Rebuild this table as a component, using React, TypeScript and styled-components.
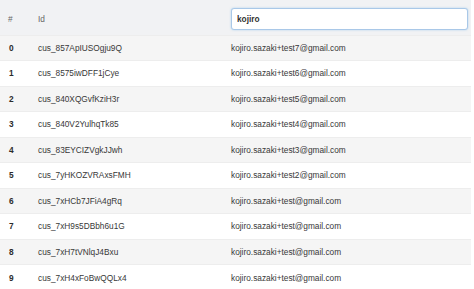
import styled, { createGlobalStyle } from "styled-components"

const GlobalStyle = createGlobalStyle`
	html, body {
		margin: 0;
		padding: 0;
		background: #ffffff;
	}
	body {
		font-family: "Liberation Sans", Arial, sans-serif;
		font-size: 8.3px;
		color: #333333;
	}
`

const Table = styled.table`
	width: 471px;
	border-collapse: collapse;
	table-layout: fixed;
`

const HeadRow = styled.tr`
	background-color: #f1f2f4;
	height: 35px;
`

const HeadCell = styled.th<{ $width?: number }>`
	box-sizing: border-box;
	width: ${p => (p.$width ? `${p.$width}px` : "auto")};
	padding: 4px 3px 0 8px;
	text-align: left;
	font-weight: normal;
	color: #666666;
	vertical-align: middle;
`

const SearchInput = styled.input`
	box-sizing: border-box;
	display: block;
	width: 237px;
	height: 22px;
	margin: 0;
	padding: 0 5px;
	border: 1px solid #a9c8e8;
	border-radius: 3px;
	background: #ffffff;
	box-shadow: 0 0 2px rgba(102, 175, 233, 0.5);
	font-family: "Liberation Sans", Arial, sans-serif;
	font-size: 8.3px;
	font-weight: bold;
	color: #333333;
	outline: none;
`

const Row = styled.tr<{ $striped: boolean }>`
	height: 25.5px;
	background-color: ${p => (p.$striped ? "#f5f5f5" : "#ffffff")};
	border-top: 1px solid #ededed;
`

const IndexCell = styled.td`
	box-sizing: border-box;
	padding: 0 8px 0 9px;
	font-weight: bold;
	color: #2b2b2b;
`

const Cell = styled.td`
	box-sizing: border-box;
	padding: 0 8px;
	color: #383838;
	white-space: nowrap;
	overflow: hidden;
`

const customers = [
	{ id: "cus_857ApIUSOgju9Q", email: "kojiro.sazaki+test7@gmail.com" },
	{ id: "cus_8575iwDFF1jCye", email: "kojiro.sazaki+test6@gmail.com" },
	{ id: "cus_840XQGvfKziH3r", email: "kojiro.sazaki+test5@gmail.com" },
	{ id: "cus_840V2YulhqTk85", email: "kojiro.sazaki+test4@gmail.com" },
	{ id: "cus_83EYCIZVgkJJwh", email: "kojiro.sazaki+test3@gmail.com" },
	{ id: "cus_7yHKOZVRAxsFMH", email: "kojiro.sazaki+test2@gmail.com" },
	{ id: "cus_7xHCb7JFiA4gRq", email: "kojiro.sazaki+test@gmail.com" },
	{ id: "cus_7xH9s5DBbh6u1G", email: "kojiro.sazaki+test@gmail.com" },
	{ id: "cus_7xH7tVNlqJ4Bxu", email: "kojiro.sazaki+test@gmail.com" },
	{ id: "cus_7xH4xFoBwQQLx4", email: "kojiro.sazaki+test@gmail.com" },
]

const App = () => {
	return <>
		<GlobalStyle />
		<Table>
			<thead>
				<HeadRow>
					<HeadCell $width={30}>#</HeadCell>
					<HeadCell $width={193}>Id</HeadCell>
					<HeadCell>
						<SearchInput defaultValue="kojiro" autoFocus />
					</HeadCell>
				</HeadRow>
			</thead>
			<tbody>
				{customers.map((c, i) => (
					<Row key={c.id} $striped={i % 2 === 0}>
						<IndexCell>{i}</IndexCell>
						<Cell>{c.id}</Cell>
						<Cell>{c.email}</Cell>
					</Row>
				))}
			</tbody>
		</Table>
	</>
}

export default App
